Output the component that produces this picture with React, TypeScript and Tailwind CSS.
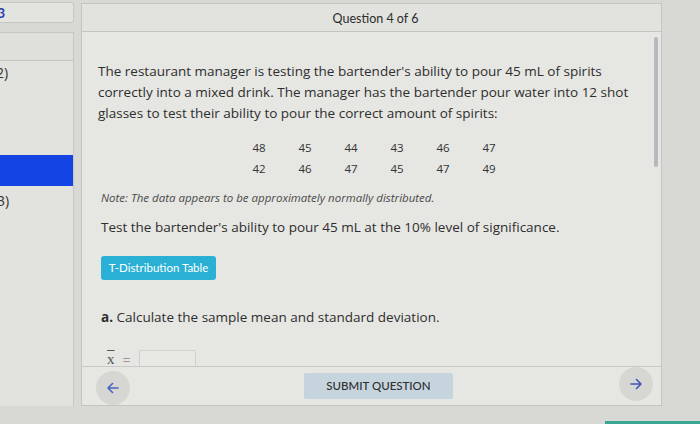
import React from "react";

const rows = [
  [48, 45, 44, 43, 46, 47],
  [42, 46, 47, 45, 47, 49],
];

export default function App() {
  return (
    <div
      className="w-[700px] h-[424px] bg-[#d8d8d4] flex flex-col overflow-hidden relative"
      style={{ fontFamily: '"Open Sans", "Liberation Sans", sans-serif' }}
    >
      <div className="flex h-[406px]">
        {/* Sidebar */}
        <div className="w-[74px] flex flex-col">
          <div className="mt-[2px] h-[21px] bg-[#e3e3df] border border-[#c6c6c2] border-l-0 rounded-r-[3px] flex items-center">
            <span
              className="-ml-[3px] text-[14px] font-bold text-[#2a3fb0]"
              style={{ fontFamily: "Lato, sans-serif" }}
            >
              3
            </span>
          </div>
          <div className="mt-[9px] flex-1 bg-[#e2e2de] border-r border-[#c6c6c2] flex flex-col">
            <div className="h-[29px] bg-[#dfdfdb] border-y border-[#c6c6c2]" />
            <div className="mt-[1px] h-[21px] flex items-center">
              <span className="-ml-[4px] text-[14px] text-[#333]">2)</span>
            </div>
            <div className="mt-[72px] h-[31px] bg-[#1444e4]" />
            <div className="mt-[4px] h-[21px] flex items-center">
              <span className="-ml-[3px] text-[14px] text-[#333]">3)</span>
            </div>
          </div>
        </div>

        {/* Main panel */}
        <div className="ml-[7px] w-[581px] flex flex-col">
          <div className="mt-[3px] h-[30px] bg-[#e2e2de] border border-[#c4c4c0] flex items-center justify-center">
            <span
              className="ml-[8px] mt-[4px] text-[12.5px] text-[#2c2c2c]"
              style={{ fontFamily: "Lato, sans-serif" }}
            >
              Question 4 of 6
            </span>
          </div>
          <div className="flex-1 bg-[#e6e6e2] border border-t-0 border-[#c4c4c0] flex flex-col relative">
            <div className="absolute right-[3px] top-[5px] w-[4px] h-[130px] rounded-full bg-[#b6babd]" />
            <div className="h-[334px] overflow-hidden pl-[16px] pr-[40px]">
              <p className="mt-[29px] w-[545px] text-[13.5px] leading-[21px] text-[#2e2e2e]">
                The restaurant manager is testing the bartender's ability to pour 45 mL of spirits correctly into a mixed drink. The manager has the bartender pour water into 12 shot glasses to test their ability to pour the correct amount of spirits:
              </p>
              <div className="mt-[13px] ml-[138px] grid grid-cols-[repeat(6,46px)] text-[11.5px] leading-[21px] text-[#333] text-center">
                {rows.flat().map((n, i) => (
                  <span key={i}>{n}</span>
                ))}
              </div>
              <p className="mt-[10px] ml-[3px] text-[11.5px] leading-[18px] italic text-[#4a4a4a]">
                Note: The data appears to be approximately normally distributed.
              </p>
              <p className="mt-[10px] ml-[3px] text-[13.5px] leading-[21px] text-[#2e2e2e]">
                Test the bartender's ability to pour 45 mL at the 10% level of significance.
              </p>
              <div
                className="mt-[18px] ml-[3px] w-[115px] h-[24px] rounded-[3px] bg-[#2ab0d4] flex items-center justify-center text-white text-[11.5px]"
                style={{ fontFamily: "Lato, sans-serif" }}
              >
                T-Distribution Table
              </div>
              <p className="mt-[27px] ml-[3px] text-[13.5px] leading-[21px] text-[#2e2e2e]">
                <span className="font-bold">a.</span> Calculate the sample mean and standard deviation.
              </p>
              <div className="mt-[22px] ml-[9px] flex items-start gap-[8px]">
                <span
                  className="overline text-[15px] leading-[22px] text-[#555] -mt-[2px]"
                  style={{ fontFamily: '"Liberation Serif", serif' }}
                >
                  x
                </span>
                <span className="text-[14px] leading-[22px] text-[#999] -mt-[1px]">=</span>
                <div className="w-[57px] h-[22px] border border-[#cfcfcb] bg-[#e8e8e4] rounded-[2px]" />
              </div>
            </div>
            <div className="flex-1 border-t border-[#c8c8c4] flex items-center">
              <div className="ml-[14px] w-[34px] h-[34px] rounded-full bg-[#d6d6d3] flex items-center justify-center mt-[4px]">
                <svg width="16" height="16" viewBox="0 0 16 16" fill="none" stroke="#4a63c4" strokeWidth="1.6" strokeLinecap="round" strokeLinejoin="round">
                  <path d="M13 8H3M7.5 3.5L3 8l4.5 4.5" />
                </svg>
              </div>
              <div
                className="ml-[174px] w-[149px] h-[26px] rounded-[2px] bg-[#c6d4de] flex items-center justify-center text-[11.5px] font-medium text-[#2e2e2e]"
                style={{ fontFamily: "Lato, sans-serif" }}
              >
                SUBMIT QUESTION
              </div>
              <div className="ml-[166px] w-[34px] h-[34px] rounded-full bg-[#d6d6d3] flex items-center justify-center -mt-[4px]">
                <svg width="16" height="16" viewBox="0 0 16 16" fill="none" stroke="#3f56b8" strokeWidth="1.6" strokeLinecap="round" strokeLinejoin="round">
                  <path d="M3 8h10M8.5 3.5L13 8l-4.5 4.5" />
                </svg>
              </div>
            </div>
          </div>
        </div>
      </div>
      <div className="flex-1 flex items-end justify-end">
        <div className="w-[95px] h-[3px] bg-[#3aa795]" />
      </div>
    </div>
  );
}
